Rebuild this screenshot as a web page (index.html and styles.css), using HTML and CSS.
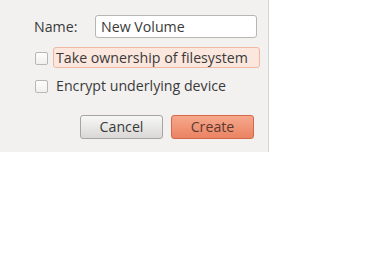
FILE: index.html
```html
<!DOCTYPE html>
<html>
<head>
<meta charset="utf-8">
<link rel="stylesheet" href="styles.css">
</head>
<body>
<div class="dialog">
  <div class="row name-row">
    <span class="label">Name:</span>
    <div class="entry">New Volume</div>
  </div>
  <div class="row check-row first">
    <span class="box"></span>
    <span class="check-label hover">Take ownership of filesystem</span>
  </div>
  <div class="row check-row second">
    <span class="box"></span>
    <span class="check-label">Encrypt underlying device</span>
  </div>
  <div class="buttons">
    <div class="btn cancel">Cancel</div>
    <div class="btn create">Create</div>
  </div>
</div>
</body>
</html>
```
FILE: styles.css
```css
html, body {
  margin: 0;
  padding: 0;
  background: #ffffff;
}
body {
  font-family: "Open Sans", "DejaVu Sans", sans-serif;
  font-size: 14.2px;
  color: #3a3a3a;
}
.dialog {
  width: 268px;
  height: 152px;
  background: #f2f1f0;
  border-right: 1px solid #d6d4d2;
  box-sizing: content-box;
  padding: 0;
}
.row {
  display: flex;
  align-items: center;
}
.name-row {
  padding: 15px 0 0 34px;
  height: 23px;
}
.label {
  width: 61px;
  line-height: 23px;
}
.entry {
  box-sizing: border-box;
  width: 162px;
  height: 23px;
  background: #ffffff;
  border: 1px solid #b8b6b3;
  border-radius: 3px;
  padding-left: 5px;
  line-height: 21px;
}
.check-row {
  padding-left: 35px;
  height: 21px;
}
.first {
  margin-top: 9px;
}
.second {
  margin-top: 7px;
}
.box {
  box-sizing: border-box;
  width: 13px;
  height: 13px;
  border: 1px solid #b9b7b4;
  border-radius: 2px;
  background: linear-gradient(#fdfdfd, #f1f0ef);
  margin-right: 5px;
  margin-top: 2px;
}
.check-label {
  box-sizing: border-box;
  height: 21px;
  line-height: 19px;
  padding: 0 2px;
  border: 1px solid transparent;
}
.check-label.hover {
  width: 207px;
  background: #fbe7de;
  border-color: #f0b7a3;
  border-radius: 3px;
}
.buttons {
  display: flex;
  gap: 8px;
  padding: 19px 0 0 80px;
}
.btn {
  box-sizing: border-box;
  width: 83px;
  height: 24px;
  border-radius: 3px;
  text-align: center;
  line-height: 22px;
}
.cancel {
  border: 1px solid #a7a5a2;
  background: linear-gradient(#f7f7f6, #d9d8d6);
  color: #3a3a3a;
}
.create {
  border: 1px solid #d4694a;
  background: linear-gradient(#f6a88b, #ea8363);
  color: #5d3a30;
}
```
